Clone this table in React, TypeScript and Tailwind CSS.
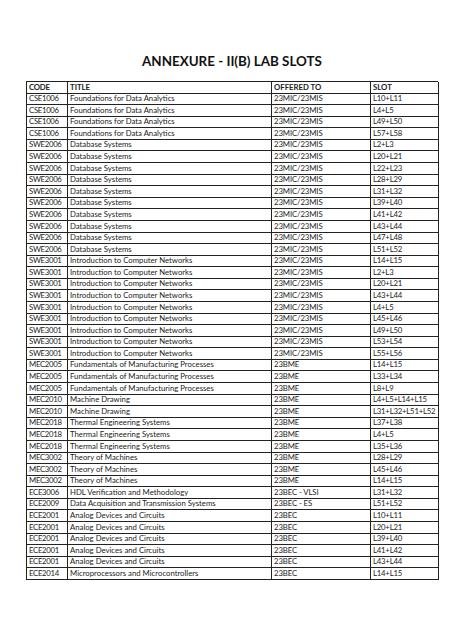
import React from "react";

type Row = [string, string, string, string];

const rows: Row[] = [
  ["CSE1006", "Foundations for Data Analytics", "23MIC/23MIS", "L10+L11"],
  ["CSE1006", "Foundations for Data Analytics", "23MIC/23MIS", "L4+L5"],
  ["CSE1006", "Foundations for Data Analytics", "23MIC/23MIS", "L49+L50"],
  ["CSE1006", "Foundations for Data Analytics", "23MIC/23MIS", "L57+L58"],
  ["SWE2006", "Database Systems", "23MIC/23MIS", "L2+L3"],
  ["SWE2006", "Database Systems", "23MIC/23MIS", "L20+L21"],
  ["SWE2006", "Database Systems", "23MIC/23MIS", "L22+L23"],
  ["SWE2006", "Database Systems", "23MIC/23MIS", "L28+L29"],
  ["SWE2006", "Database Systems", "23MIC/23MIS", "L31+L32"],
  ["SWE2006", "Database Systems", "23MIC/23MIS", "L39+L40"],
  ["SWE2006", "Database Systems", "23MIC/23MIS", "L41+L42"],
  ["SWE2006", "Database Systems", "23MIC/23MIS", "L43+L44"],
  ["SWE2006", "Database Systems", "23MIC/23MIS", "L47+L48"],
  ["SWE2006", "Database Systems", "23MIC/23MIS", "L51+L52"],
  ["SWE3001", "Introduction to Computer Networks", "23MIC/23MIS", "L14+L15"],
  ["SWE3001", "Introduction to Computer Networks", "23MIC/23MIS", "L2+L3"],
  ["SWE3001", "Introduction to Computer Networks", "23MIC/23MIS", "L20+L21"],
  ["SWE3001", "Introduction to Computer Networks", "23MIC/23MIS", "L43+L44"],
  ["SWE3001", "Introduction to Computer Networks", "23MIC/23MIS", "L4+L5"],
  ["SWE3001", "Introduction to Computer Networks", "23MIC/23MIS", "L45+L46"],
  ["SWE3001", "Introduction to Computer Networks", "23MIC/23MIS", "L49+L50"],
  ["SWE3001", "Introduction to Computer Networks", "23MIC/23MIS", "L53+L54"],
  ["SWE3001", "Introduction to Computer Networks", "23MIC/23MIS", "L55+L56"],
  ["MEC2005", "Fundamentals of Manufacturing Processes", "23BME", "L14+L15"],
  ["MEC2005", "Fundamentals of Manufacturing Processes", "23BME", "L33+L34"],
  ["MEC2005", "Fundamentals of Manufacturing Processes", "23BME", "L8+L9"],
  ["MEC2010", "Machine Drawing", "23BME", "L4+L5+L14+L15"],
  ["MEC2010", "Machine Drawing", "23BME", "L31+L32+L51+L52"],
  ["MEC2018", "Thermal Engineering Systems", "23BME", "L37+L38"],
  ["MEC2018", "Thermal Engineering Systems", "23BME", "L4+L5"],
  ["MEC2018", "Thermal Engineering Systems", "23BME", "L35+L36"],
  ["MEC3002", "Theory of Machines", "23BME", "L28+L29"],
  ["MEC3002", "Theory of Machines", "23BME", "L45+L46"],
  ["MEC3002", "Theory of Machines", "23BME", "L14+L15"],
  ["ECE3006", "HDL Verification and Methodology", "23BEC - VLSI", "L31+L32"],
  ["ECE2009", "Data Acquisition and Transmission Systems", "23BEC - ES", "L51+L52"],
  ["ECE2001", "Analog Devices and Circuits", "23BEC", "L10+L11"],
  ["ECE2001", "Analog Devices and Circuits", "23BEC", "L20+L21"],
  ["ECE2001", "Analog Devices and Circuits", "23BEC", "L39+L40"],
  ["ECE2001", "Analog Devices and Circuits", "23BEC", "L41+L42"],
  ["ECE2001", "Analog Devices and Circuits", "23BEC", "L43+L44"],
  ["ECE2014", "Microprocessors and Microcontrollers", "23BEC", "L14+L15"],
];

const cell =
  "border-r border-b border-[#222] pl-[2px] overflow-hidden whitespace-nowrap flex items-end pb-[1px] leading-[10px]";

export default function App() {
  return (
    <div
      className="w-[474px] h-[632px] bg-white text-[#222]"
      style={{ fontFamily: "Lato, 'Open Sans', sans-serif" }}
    >
      <div className="w-[412px] ml-[26px] pt-[51px]">
        <div className="text-center font-bold text-[13.4px] leading-[20px] text-[#111] mb-[10px]">
          ANNEXURE - II(B) LAB SLOTS
        </div>
        <div className="grid grid-cols-[41px_204px_99px_68px] auto-rows-[11.58px] border-l border-t border-[#222] text-[7.75px]">
          <div className={cell + " font-bold tracking-[-0.2px]"}>CODE</div>
          <div className={cell + " font-bold"}>TITLE</div>
          <div className={cell + " font-bold"}>OFFERED TO</div>
          <div className={cell + " font-bold"}>SLOT</div>
          {rows.map((r, i) => (
            <React.Fragment key={i}>
              <div className={cell + " tracking-[-0.3px]"}>{r[0]}</div>
              <div className={cell}>{r[1]}</div>
              <div className={cell + " tracking-[-0.1px]"}>{r[2]}</div>
              <div className={cell + " tracking-[-0.2px]"}>{r[3]}</div>
            </React.Fragment>
          ))}
        </div>
      </div>
    </div>
  );
}
